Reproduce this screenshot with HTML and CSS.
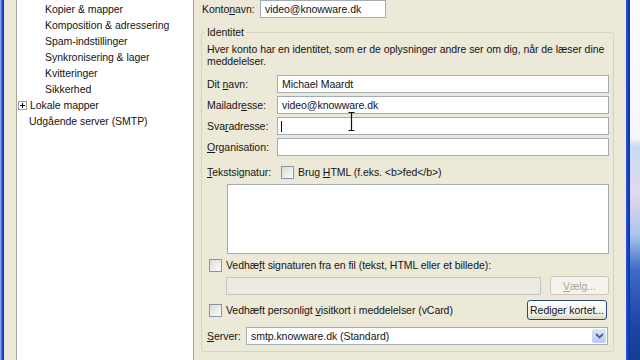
FILE: index.html
```html
<!DOCTYPE html>
<html>
<head>
    <meta charset="UTF-8">
    <title>Kontoindstillinger</title>
    <link rel="stylesheet" href="styles.css">
</head>
<body>
    <div class="screen">
        <div class="frame-l"></div>
        <div class="window">
            <!-- venstre træ -->
            <div class="tree">
                <div class="node sub">Kopier &amp; mapper</div>
                <div class="node sub">Komposition &amp; adressering</div>
                <div class="node sub">Spam-indstillinger</div>
                <div class="node sub">Synkronisering &amp; lager</div>
                <div class="node sub">Kvitteringer</div>
                <div class="node sub">Sikkerhed</div>
                <div class="node expand"><span class="plus"></span>Lokale mapper</div>
                <div class="node top">Udgående server (SMTP)</div>
            </div>

            <!-- højre side -->
            <div class="pane">
                <div class="account">
                    <span class="label">Konto<u>n</u>avn:</span>
                    <div class="field short">video@knowware.dk</div>
                </div>

                <fieldset class="group">
                    <legend>Identitet</legend>
                    <p class="info">Hver konto har en identitet, som er de oplysninger andre ser om dig, når de læser dine<br>meddelelser.</p>

                    <div class="row">
                        <span class="label wide">Dit <u>n</u>avn:</span>
                        <div class="field">Michael Maardt</div>
                    </div>
                    <div class="row">
                        <span class="label wide">Mailadr<u>e</u>sse:</span>
                        <div class="field">video@knowware.dk</div>
                    </div>
                    <div class="row">
                        <span class="label wide">Sva<u>r</u>adresse:</span>
                        <div class="field"><span class="caret"></span></div>
                    </div>
                    <div class="row">
                        <span class="label wide"><u>O</u>rganisation:</span>
                        <div class="field"></div>
                    </div>

                    <div class="sig-row">
                        <span class="label sig"><u>T</u>ekstsignatur:</span>
                        <span class="check"></span>
                        <span>Brug <u>H</u>TML (f.eks. &lt;b&gt;fed&lt;/b&gt;)</span>
                    </div>
                    <div class="textarea"></div>

                    <div class="check-row">
                        <span class="check"></span>
                        <span>Vedhæ<u>f</u>t signaturen fra en fil (tekst, HTML eller et billede):</span>
                    </div>
                    <div class="file-row">
                        <div class="field disabled"></div>
                        <button class="btn off"><u>V</u>ælg...</button>
                    </div>

                    <div class="vcard-row">
                        <span class="check"></span>
                        <span class="grow">Vedhæft personligt <u>v</u>isitkort i meddelelser (vCard)</span>
                        <button class="btn">Redi<u>g</u>er kortet...</button>
                    </div>

                    <div class="server-row">
                        <span class="label srv"><u>S</u>erver:</span>
                        <div class="select">
                            <span>smtp.knowware.dk (Standard)</span>
                            <span class="drop">
                                <svg width="9" height="6" viewBox="0 0 9 6"><path d="M1 1 L4.5 4.5 L8 1" fill="none" stroke="#4d6185" stroke-width="1.8"/></svg>
                            </span>
                        </div>
                    </div>
                </fieldset>
            </div>
        </div>
        <div class="frame-r"></div>
        <div class="desktop"></div>
    </div>

    <!-- musemarkør -->
    <svg class="ibeam" width="7" height="19" viewBox="0 0 7 19">
        <path d="M0.5 0.5 H6.5 M3.5 0.5 V18.5 M0.5 18.5 H6.5" stroke="#111" stroke-width="1.2" fill="none"/>
    </svg>
</body>
</html>
```

FILE: styles.css
```css
body {
    margin: 0;
    font-family: "Liberation Sans", Arial, sans-serif;
    font-size: 10.5px;
    letter-spacing: -0.05px;
    color: #141414;
    background-color: #ece9d8;
    position: relative;
    overflow: hidden;
}

u {
    text-decoration: underline;
    text-underline-offset: 1px;
}

.screen {
    display: flex;
    width: 640px;
    height: 360px;
}

.frame-l {
    width: 4px;
    background: linear-gradient(to right, #9fb6e6, #1c4ad2 60%, #0b33c0);
}

.window {
    flex: 1;
    display: flex;
    background-color: #ece9d8;
}

.frame-r {
    width: 4px;
    background: linear-gradient(to right, #2a55d8, #0a2ca8);
}

.desktop {
    width: 10px;
    background: linear-gradient(to bottom, #fdfdfd 0, #f6f7fa 138px, #c8dcf2 146px, #e4d8ea 195px, #a9c4ea 235px, #3d6cc4 270px, #1f48a8 320px, #163d92 360px);
}

/* træet */
.tree {
    width: 176px;
    margin-left: 12px;
    padding-top: 1px;
    background-color: #fff;
    border-left: 1px solid #a7a69a;
    border-right: 1px solid #a7a69a;
}

.node {
    height: 16px;
    line-height: 16px;
    white-space: nowrap;
}

.node.sub {
    padding-left: 28px;
}

.node.top {
    padding-left: 12px;
}

.node.expand {
    padding-left: 1px;
    display: flex;
    align-items: center;
}

.plus {
    width: 7px;
    height: 7px;
    border: 1px solid #919b9c;
    margin-right: 3px;
    position: relative;
    background: #fff;
}

.plus::before,
.plus::after {
    content: "";
    position: absolute;
    background: #000;
}

.plus::before {
    left: 1px;
    top: 3px;
    width: 5px;
    height: 1px;
}

.plus::after {
    left: 3px;
    top: 1px;
    width: 1px;
    height: 5px;
}

/* højre panel */
.pane {
    flex: 1;
    padding-left: 8px;
    padding-right: 12px;
}

.account {
    display: flex;
    align-items: center;
    height: 19px;
    margin-top: -1px;
}

.label {
    width: 58px;
    flex-shrink: 0;
}

.label.wide {
    width: 70px;
}

.label.sig {
    width: 74px;
}

.label.srv {
    width: 39px;
}

.field {
    flex: 1;
    height: 16px;
    line-height: 16px;
    border: 1px solid #a3abb3;
    background: #fff;
    padding-left: 4px;
    white-space: nowrap;
    position: relative;
}

.field.short {
    flex: none;
    width: 120px;
}

.field.disabled {
    flex: none;
    width: 309px;
    height: 16px;
    background: #ebeae3;
    border-color: #c4c6c4;
}

.caret {
    position: absolute;
    left: 3px;
    top: 3px;
    width: 1px;
    height: 11px;
    background: #000;
}

.group {
    margin: 8px 0 0 -1px;
    border: 1px solid #d5d2c3;
    border-radius: 3px;
    padding: 0 4px 6px 5px;
}

legend {
    padding: 0 2px;
    margin-left: -2px;
    line-height: 13px;
}

.info {
    margin: 4px 0 8px 0;
    line-height: 12px;
}

.row {
    display: flex;
    align-items: center;
    height: 18px;
    margin-bottom: 3px;
}

.sig-row {
    display: flex;
    align-items: center;
    height: 16px;
    margin-top: 8px;
}

.check {
    width: 11px;
    height: 11px;
    border: 1px solid #8497a8;
    background: linear-gradient(135deg, #dcdcd6, #fbfbf9);
    flex-shrink: 0;
    margin-right: 4px;
}

.textarea {
    height: 68px;
    margin: 4px 0 0 20px;
    border: 1px solid #a3abb3;
    background: #fff;
}

.check-row {
    display: flex;
    align-items: center;
    height: 14px;
    margin-top: 4px;
    padding-left: 2px;
}

.file-row {
    display: flex;
    align-items: center;
    height: 19px;
    margin-top: 4px;
    padding-left: 19px;
}

.btn {
    font-family: inherit;
    font-size: 10.5px;
    letter-spacing: -0.05px;
    color: #141414;
    height: 20px;
    padding: 0;
    border: 1px solid #2b4a78;
    border-radius: 3px;
    background: linear-gradient(to bottom, #ffffff, #f1f0e9 70%, #dcd8c6);
    width: 80px;
}

.btn.off {
    width: 59px;
    margin-left: 9px;
    height: 19px;
    color: #aca899;
    border-color: #c9c7ba;
    background: #f4f3ee;
}

.vcard-row {
    display: flex;
    align-items: center;
    height: 20px;
    margin-top: 5px;
    padding-left: 2px;
    padding-right: 2px;
}

.grow {
    flex: 1;
}

.server-row {
    display: flex;
    align-items: center;
    height: 18px;
    margin-top: 7px;
}

.select {
    flex: 1;
    height: 16px;
    margin-right: 1px;
    border: 1px solid #a3abb3;
    background: #fff;
    display: flex;
    align-items: center;
    justify-content: space-between;
    padding-left: 4px;
}

.drop {
    width: 14px;
    height: 14px;
    margin-right: 1px;
    background: linear-gradient(to bottom, #dce6fb, #b7cbf5);
    border-radius: 2px;
    display: flex;
    align-items: center;
    justify-content: center;
}

.ibeam {
    position: absolute;
    left: 348px;
    top: 112px;
}
```
